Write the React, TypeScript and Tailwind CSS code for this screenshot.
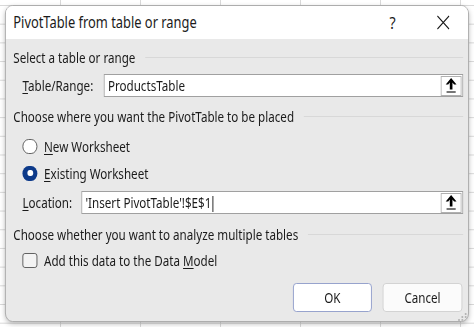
import React from 'react';

function UploadButton() {
  return (
    <div className="w-[25px] h-[20px] bg-white border border-[#b0b0b0] flex items-center justify-center shrink-0 mr-[1px]">
      <svg width="17" height="17" viewBox="0 0 17 17">
        <path d="M8.5 1 L2 7.5 L5 7.5 L6.9 5.6 L6.9 12.5 L10.1 12.5 L10.1 5.6 L12 7.5 L15 7.5 Z" fill="#000" />
        <rect x="3" y="14.2" width="11" height="1.6" fill="#555" />
      </svg>
    </div>
  );
}

function GroupHeading({ children }: { children: React.ReactNode }) {
  return (
    <div className="flex items-center gap-3 h-[22px]">
      <span className="whitespace-nowrap">{children}</span>
      <div className="flex-1 h-px bg-[#d8d8d8]" />
    </div>
  );
}

export default function App() {
  return (
    <div
      className="w-[474px] h-[327px] bg-white bg-[linear-gradient(#d9d9d9_1px,transparent_1px),linear-gradient(90deg,#d9d9d9_1px,transparent_1px)] bg-[size:80px_18.7px] bg-[position:60px_5px] pt-[5px] pl-[5px] overflow-hidden"
      style={{ fontFamily: '"Noto Sans", "Open Sans", sans-serif' }}
    >
      {/* the dialog is drawn wider and squeezed, as in the screenshot */}
      <div className="w-[559px] h-[317px] origin-top-left scale-x-[0.83] rounded-[9px] border border-[#a9a9a9] bg-[#e9e9e9] overflow-hidden shadow-[0_2px_6px_rgba(0,0,0,0.25)] flex flex-col text-[14px] text-[#1b1b1b]">
        {/* Title bar */}
        <div className="h-[33px] bg-white flex items-center pl-[9px] shrink-0">
          <span className="flex-1 text-[15.5px]">PivotTable from table or range</span>
          <span className="text-[17px] w-[30px] text-center mr-[38px]">?</span>
          <svg width="16" height="15" viewBox="0 0 16 15" className="mr-[22px]">
            <path d="M1 1 L15 14 M15 1 L1 14" stroke="#1b1b1b" strokeWidth="1.2" />
          </svg>
        </div>

        {/* Body */}
        <div className="flex-1 flex flex-col pl-[9px] pr-[6px] pt-[7px]">
          <GroupHeading>Select a table or range</GroupHeading>
          <div className="flex items-center mt-[6px] pl-[11px]">
            <span className="w-[98px] shrink-0"><span className="underline underline-offset-2">T</span>able/Range:</span>
            <div className="flex-1 h-[23px] bg-white border border-[#a0a0a0] flex items-center pl-[4px]">
              <span className="flex-1">ProductsTable</span>
              <UploadButton />
            </div>
          </div>

          <div className="mt-[8px]">
            <GroupHeading>Choose where you want the PivotTable to be placed</GroupHeading>
          </div>
          <div className="flex items-center mt-[10px] pl-[11px] h-[18px]">
            <div className="w-[18px] h-[15px] rounded-full border border-[#555] bg-white" />
            <span className="ml-[8px]"><span className="underline underline-offset-2">N</span>ew Worksheet</span>
          </div>
          <div className="flex items-center mt-[9px] pl-[11px] h-[18px]">
            <div className="w-[18px] h-[15px] rounded-full bg-[#0d3a8a] flex items-center justify-center">
              <div className="w-[7px] h-[6px] rounded-full bg-white" />
            </div>
            <span className="ml-[8px]"><span className="underline underline-offset-2">E</span>xisting Worksheet</span>
          </div>
          <div className="flex items-center mt-[9px] pl-[11px]">
            <span className="w-[71px] shrink-0"><span className="underline underline-offset-2">L</span>ocation:</span>
            <div className="flex-1 h-[23px] bg-white border border-[#a0a0a0] flex items-center pl-[4px]">
              <span className="flex-1">'Insert PivotTable'!$E$1<span className="inline-block w-px h-[16px] bg-black align-middle ml-px" /></span>
              <UploadButton />
            </div>
          </div>

          <div className="mt-[9px]">
            <GroupHeading>Choose whether you want to analyze multiple tables</GroupHeading>
          </div>
          <div className="flex items-center mt-[6px] pl-[11px] h-[18px]">
            <div className="w-[18px] h-[15px] rounded-[3px] border border-[#555] bg-[#f3f3f3]" />
            <span className="ml-[8px]">Add this data to the Data <span className="underline underline-offset-2">M</span>odel</span>
          </div>

          <div className="flex justify-end gap-[13px] mt-[14px] pr-[1px]">
            <button className="w-[95px] h-[29px] bg-white border border-[#8e9bc9] rounded-[4px] text-[14px]">OK</button>
            <button className="w-[96px] h-[29px] bg-[#fbfbfb] border border-[#d0d0d0] rounded-[4px] text-[14px]">Cancel</button>
          </div>

          {/* resize grip */}
          <div className="flex justify-end mt-auto mb-[1px] mr-[-5px]">
            <svg width="12" height="10" viewBox="0 0 12 10">
              <rect x="9" y="1" width="2" height="2" fill="#b5b5b5" />
              <rect x="5" y="4" width="2" height="2" fill="#b5b5b5" />
              <rect x="9" y="4" width="2" height="2" fill="#b5b5b5" />
              <rect x="1" y="7" width="2" height="2" fill="#b5b5b5" />
              <rect x="5" y="7" width="2" height="2" fill="#b5b5b5" />
              <rect x="9" y="7" width="2" height="2" fill="#b5b5b5" />
            </svg>
          </div>
        </div>
      </div>
    </div>
  );
}
